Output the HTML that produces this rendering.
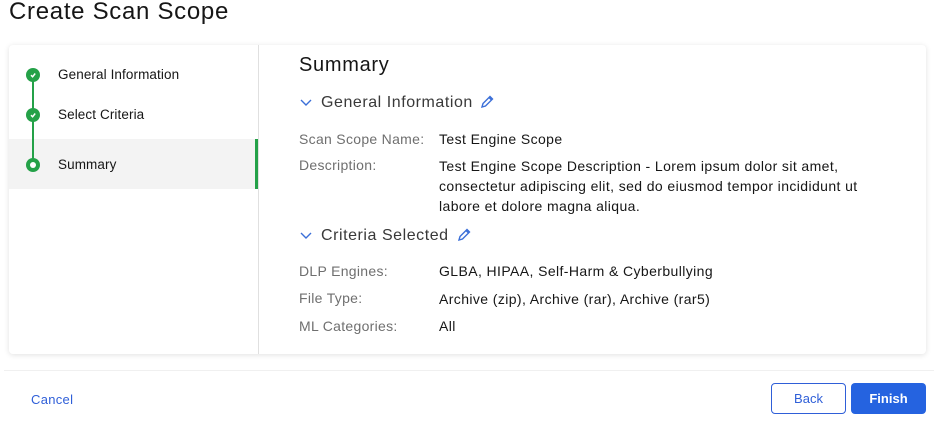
<!DOCTYPE html>
<html><head><style>
body{margin:0;width:938px;height:422px;background:#fff;font-family:"Liberation Sans",sans-serif;color:#1a1a1a;position:relative;overflow:hidden}
.a{position:absolute;white-space:nowrap}
h1{position:absolute;left:9px;top:-2px;margin:0;font-size:24px;font-weight:normal;color:#161616;letter-spacing:0.7px}
.card{position:absolute;left:9px;top:45px;width:917px;height:309px;background:#fff;border-radius:4px;box-shadow:0 1px 6px rgba(0,0,0,.12)}
.side{position:absolute;left:0;top:0;width:249px;height:309px;border-right:1px solid #e0e0e0}
.act{position:absolute;left:0;top:94px;width:246px;height:50px;background:#f3f3f3;border-right:3px solid #24a148}
.dot{position:absolute;width:14px;height:14px;border-radius:50%;background:#24a148}
.st{font-size:13.5px;color:#161616;letter-spacing:0.1px}
.lab{font-size:14px;color:#6f6f6f;letter-spacing:0.3px}
.val{font-size:14px;color:#161616;line-height:20px;letter-spacing:0.4px}
.hd{font-size:16px;color:#393939;letter-spacing:0.55px}
.btn{position:absolute;top:383px;height:31px;border-radius:4px;font-size:13px;font-weight:bold;display:flex;align-items:center;justify-content:center;box-sizing:border-box}
</style></head><body>
<h1>Create Scan Scope</h1>
<div class="card">
<div class="side">
<div class="act"></div>
<div style="position:absolute;left:23px;top:31px;width:2px;height:90px;background:#24a148"></div>
<div class="dot" style="left:17px;top:23px"></div>
<svg class="a" style="left:19px;top:25px" width="10" height="10"><path d="M3 5.2l1.6 1.6L7.2 3.5" stroke="#fff" stroke-width="1.5" fill="none"/></svg>
<div class="dot" style="left:17px;top:63px"></div>
<svg class="a" style="left:19px;top:65px" width="10" height="10"><path d="M3 5.2l1.6 1.6L7.2 3.5" stroke="#fff" stroke-width="1.5" fill="none"/></svg>
<div class="dot" style="left:17px;top:113px"></div>
<div style="position:absolute;left:21px;top:117px;width:6px;height:6px;border-radius:50%;background:#fff"></div>
<div class="a st" style="left:49px;top:22px">General Information</div>
<div class="a st" style="left:49px;top:62px">Select Criteria</div>
<div class="a st" style="left:49px;top:112px">Summary</div>
</div>
</div>
<div class="a" style="left:299px;top:54px;font-size:20px;color:#161616;letter-spacing:0.7px">Summary</div>
<svg class="a" style="left:300px;top:98px" width="12" height="10"><path d="M1 2l5 5 5-5" stroke="#3b6fd8" stroke-width="1.4" fill="none"/></svg>
<div class="a hd" style="left:321px;top:94px">General Information</div>
<svg class="a" style="left:480px;top:95px" width="14" height="14"><path d="M2 12l1-3.5 7-7 2.5 2.5-7 7z M9 2.5l2.5 2.5" stroke="#3b6fd8" stroke-width="1.4" fill="none"/></svg>
<div class="a lab" style="left:299px;top:131px">Scan Scope Name:</div>
<div class="a val" style="left:439px;top:129px">Test Engine Scope</div>
<div class="a lab" style="left:299px;top:157px">Description:</div>
<div class="a val" style="left:439px;top:156px">Test Engine Scope Description - Lorem ipsum dolor sit amet,<br>consectetur adipiscing elit, sed do eiusmod tempor incididunt ut<br>labore et dolore magna aliqua.</div>
<svg class="a" style="left:300px;top:231px" width="12" height="10"><path d="M1 2l5 5 5-5" stroke="#3b6fd8" stroke-width="1.4" fill="none"/></svg>
<div class="a hd" style="left:321px;top:227px">Criteria Selected</div>
<svg class="a" style="left:457px;top:228px" width="14" height="14"><path d="M2 12l1-3.5 7-7 2.5 2.5-7 7z M9 2.5l2.5 2.5" stroke="#3b6fd8" stroke-width="1.4" fill="none"/></svg>
<div class="a lab" style="left:299px;top:263px">DLP Engines:</div>
<div class="a val" style="left:439px;top:261px">GLBA, HIPAA, Self-Harm &amp; Cyberbullying</div>
<div class="a lab" style="left:299px;top:290px">File Type:</div>
<div class="a val" style="left:439px;top:289px">Archive (zip), Archive (rar), Archive (rar5)</div>
<div class="a lab" style="left:299px;top:318px">ML Categories:</div>
<div class="a val" style="left:439px;top:316px">All</div>
<div class="a" style="left:4px;top:370px;width:930px;height:1px;background:#f0f0f0"></div>
<div class="a" style="left:31px;top:392px;font-size:13px;color:#2f5fd8;letter-spacing:0.3px">Cancel</div>
<div class="btn" style="left:771px;width:75px;border:1px solid #2f5fd8;color:#2f5fd8;font-weight:normal">Back</div>
<div class="btn" style="left:851px;width:75px;background:#2563e0;color:#fff">Finish</div>
</body></html>
